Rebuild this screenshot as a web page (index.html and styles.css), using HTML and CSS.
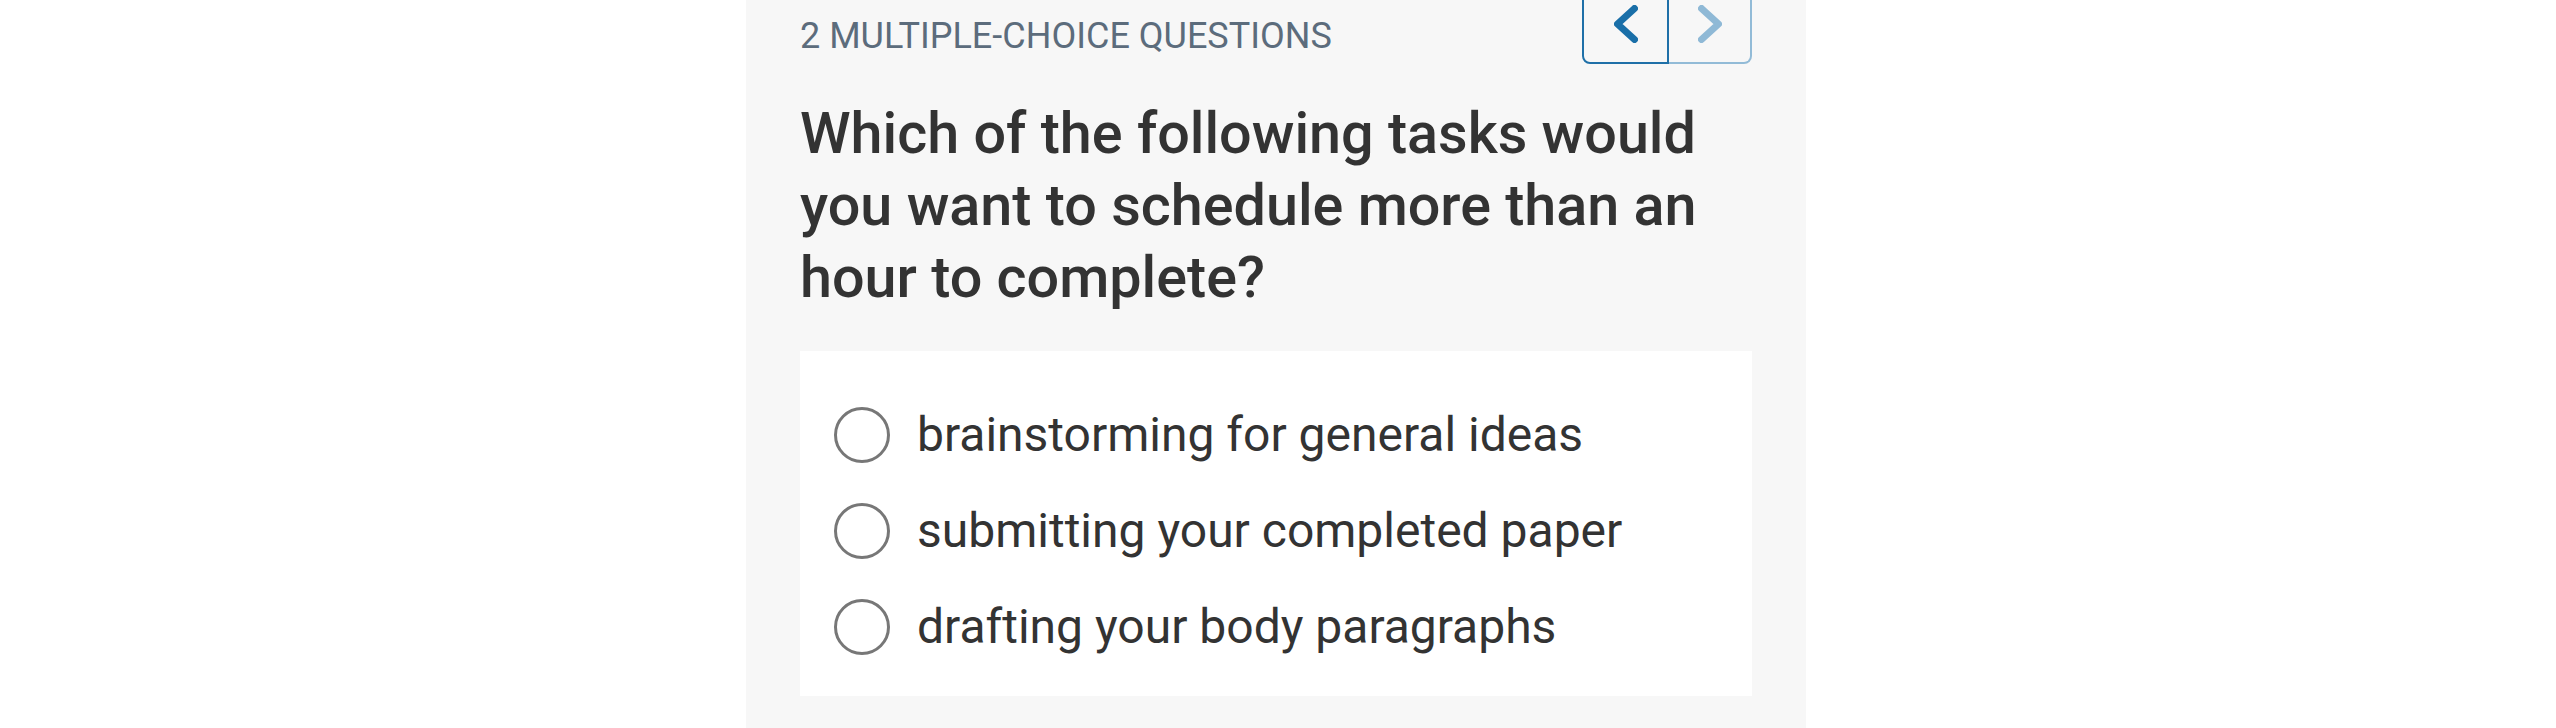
FILE: index.html
```html
<!DOCTYPE html>
<html lang="en">
<head>
<meta charset="utf-8">
<title>Quiz</title>
<link rel="stylesheet" href="styles.css">
</head>
<body>
<div class="panel">
  <div class="header">
    <div class="label">2 MULTIPLE-CHOICE QUESTIONS</div>
    <div class="nav">
      <button class="nav-btn prev" aria-label="Previous">
        <svg width="24" height="38" viewBox="0 0 24 38"><path d="M20.5 3.5 L3.5 19 L20.5 34.5" fill="none" stroke="#1a6fa8" stroke-width="7" stroke-linecap="round" stroke-linejoin="round"/></svg>
      </button>
      <button class="nav-btn next" aria-label="Next">
        <svg width="24" height="38" viewBox="0 0 24 38"><path d="M3.5 3.5 L20.5 19 L3.5 34.5" fill="none" stroke="#8fb9d6" stroke-width="7" stroke-linecap="round" stroke-linejoin="round"/></svg>
      </button>
    </div>
  </div>
  <h1 class="question">Which of the following tasks would you want to schedule more than an hour to complete?</h1>
  <div class="options">
    <label class="option"><span class="radio"></span><span class="option-text">brainstorming for general ideas</span></label>
    <label class="option"><span class="radio"></span><span class="option-text">submitting your completed paper</span></label>
    <label class="option"><span class="radio"></span><span class="option-text">drafting your body paragraphs</span></label>
  </div>
</div>
</body>
</html>
```
FILE: styles.css
```css
html, body {
  margin: 0;
  padding: 0;
  background: #ffffff;
}
body {
  display: flow-root;
  font-family: Roboto, "Liberation Sans", Arial, sans-serif;
}
.panel {
  width: 1060px;
  box-sizing: border-box;
  margin: -20px 0 0 746px;
  padding: 0 54px 60px;
  background: #f7f7f7;
}
.header {
  display: flex;
  justify-content: space-between;
  align-items: flex-start;
}
.label {
  padding-top: 35px;
  font-size: 36px;
  line-height: 42px;
  color: #5c6c7c;
  font-weight: 400;
}
.nav {
  display: flex;
  height: 84px;
}
.nav-btn {
  display: flex;
  align-items: center;
  justify-content: center;
  padding: 0;
  margin: 0;
  height: 84px;
  background: #f7f7f7;
  box-sizing: border-box;
  cursor: pointer;
}
.nav-btn svg {
  margin-top: 3px;
}
.prev {
  width: 87px;
  border: 2px solid #1f70a8;
  border-radius: 8px 0 0 8px;
}
.next {
  width: 83px;
  border: 2px solid #92bbd7;
  border-left: none;
  border-radius: 0 8px 8px 0;
}
.question {
  margin: 34px 0 37px;
  font-size: 57.5px;
  line-height: 72px;
  font-weight: 500;
  color: #333333;
}
.options {
  background: #ffffff;
  padding: 36px 34px 21px;
  display: flex;
  flex-direction: column;
}
.option {
  display: flex;
  align-items: center;
  height: 96px;
}
.radio {
  width: 56px;
  height: 56px;
  box-sizing: border-box;
  border: 3px solid #777777;
  border-radius: 50%;
  flex: none;
  margin-right: 27px;
}
.option-text {
  font-size: 48px;
  line-height: 96px;
  color: #333333;
}
```
